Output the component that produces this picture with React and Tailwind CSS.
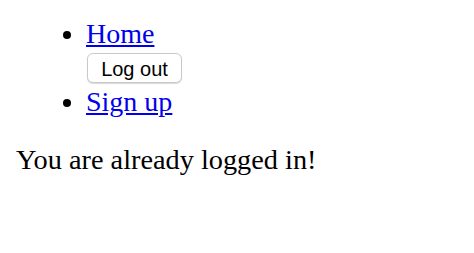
import React from "react";

const App = () => {
  return (
    <div className="min-h-screen bg-white pl-[16px] text-black" style={{ fontFamily: '"Liberation Serif", "Times New Roman", serif' }}>
      <ul className="list-disc pl-[70px] pt-[18px] text-[28px] leading-[31px]">
        <li>
          <a href="#" className="text-[#0000ee] underline">Home</a>
        </li>
        <div className="mt-[4px] ml-[1px] flex">
          <button
            className="h-[30px] w-[95px] rounded-[6px] border border-[#c9c9c9] bg-white pt-[1px] text-[20px] leading-none text-black shadow-[0_1px_1px_rgba(0,0,0,0.15)]"
            style={{ fontFamily: '"Liberation Sans", Arial, sans-serif' }}
          >
            Log out
          </button>
        </div>
        <li className="mt-[3px]">
          <a href="#" className="text-[#0000ee] underline">Sign up</a>
        </li>
      </ul>
      <p className="mt-[27px] text-[28.3px] leading-[31px]">You are already logged in!</p>
    </div>
  );
};

export default App;
